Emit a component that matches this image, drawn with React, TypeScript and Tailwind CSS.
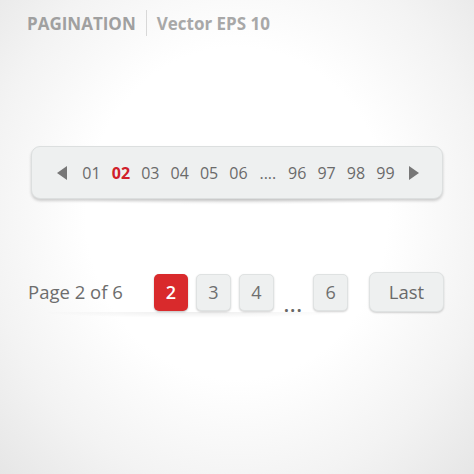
const NUMBERS = ["01", "02", "03", "04", "05", "06", "....", "96", "97", "98", "99"];

function Arrow({ dir }: { dir: "left" | "right" }) {
  return (
    <svg width="10" height="14" viewBox="0 0 10 14" className="shrink-0">
      {dir === "left" ? (
        <polygon points="10,0 10,14 0,7" fill="#777" />
      ) : (
        <polygon points="0,0 0,14 10,7" fill="#777" />
      )}
    </svg>
  );
}

function PageButton({ label, active }: { label: string; active?: boolean }) {
  return (
    <div
      className={
        active
          ? "w-[34px] h-[37px] rounded-[5px] bg-[#d92a2c] text-white flex items-center justify-center text-[18px] font-semibold shadow-[0_1px_2px_rgba(0,0,0,0.25)]"
          : "w-[35px] h-[37px] rounded-[5px] bg-[#eef0f0] text-[#6f6f6f] border border-[#dfe2e2] flex items-center justify-center text-[18px] font-medium shadow-[0_1px_2px_rgba(0,0,0,0.18)]"
      }
    >
      {label}
    </div>
  );
}

export default function App() {
  return (
    <div
      className="w-[474px] h-[474px] overflow-hidden bg-[radial-gradient(ellipse_at_50%_45%,#ffffff_45%,#f3f3f3_75%,#e6e6e6_100%)] font-['Open_Sans',sans-serif]"
    >
      {/* Title */}
      <div className="flex items-center pt-[10px] pl-[27px] h-[36px]">
        <span className="text-[17px] font-bold text-[#a0a0a0] leading-none">PAGINATION</span>
        <span className="w-px h-[26px] bg-[#d8d8d8] mx-[10px]" />
        <span className="text-[17px] font-bold text-[#a8a8a8] leading-none">Vector EPS 10</span>
      </div>

      {/* Numbered bar */}
      <div className="mt-[110px] ml-[31px] w-[412px]">
        <div className="h-[53px] rounded-[9px] bg-[#eef0f0] border border-[#dcdfdf] shadow-[0_2px_3px_rgba(0,0,0,0.18)] flex items-center pl-[25px]">
          <Arrow dir="left" />
          <div className="flex items-center gap-[10.4px] ml-[15px] mr-[14px] text-[16px] font-medium text-[#6a6a6a]">
            {NUMBERS.map((n) => (
              <span
                key={n}
                className={
                  n === "02"
                    ? "text-[#d0202a] font-bold w-[19px] text-center"
                    : "w-[19px] text-center"
                }
              >
                {n}
              </span>
            ))}
          </div>
          <Arrow dir="right" />
        </div>
        <div className="mx-[30px] h-[6px] bg-[radial-gradient(ellipse_at_50%_0%,rgba(0,0,0,0.08),transparent_70%)]" />
      </div>

      {/* Page buttons */}
      <div className="mt-[67px] ml-[28px] flex items-center">
        <span className="text-[18.5px] font-medium text-[#6d6d6d] w-[126px]">Page 2 of 6</span>
        <div className="flex items-center gap-[8px]">
          <PageButton label="2" active />
          <PageButton label="3" />
          <PageButton label="4" />
          <span className="self-end text-[#666] text-[17px] font-bold tracking-[1.5px] mx-[2px] leading-none mb-[-3px]">...</span>
          <PageButton label="6" />
        </div>
        <div className="ml-[21px] w-[75px] h-[40px] rounded-[7px] bg-[#eef0f0] border border-[#dfe2e2] shadow-[0_1px_2px_rgba(0,0,0,0.18)] flex items-center justify-center text-[18.5px] font-medium text-[#6a6a6a]">
          Last
        </div>
      </div>
      <div className="ml-[40px] w-[310px] h-[6px] bg-[radial-gradient(ellipse_at_50%_0%,rgba(0,0,0,0.07),transparent_70%)]" />
    </div>
  );
}
